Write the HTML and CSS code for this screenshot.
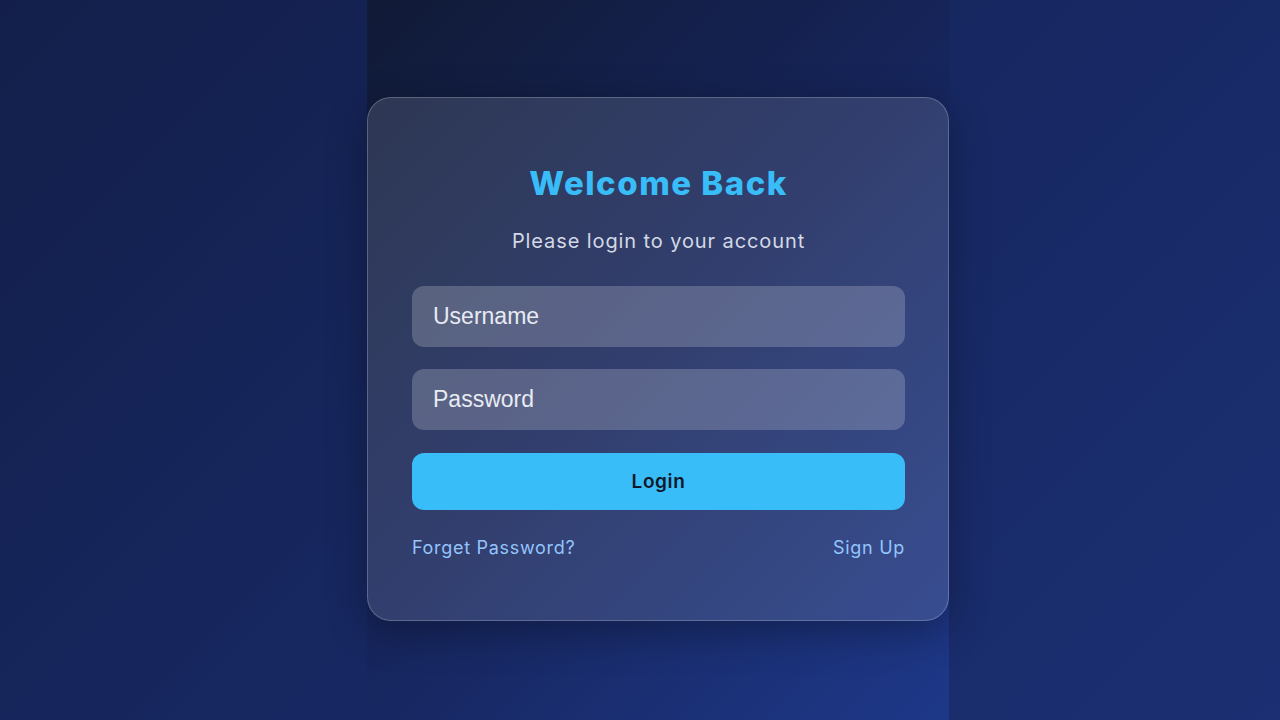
FILE: index.html
```html
<!DOCTYPE html>
<html lang="en">
<head>
<meta charset="utf-8">
<title>Login</title>
<link rel="stylesheet" href="styles.css">
</head>
<body>
<div class="page">
  <div class="side"></div>
  <div class="stage">
    <form class="card">
      <h1 class="title">Welcome Back</h1>
      <p class="subtitle">Please login to your account</p>
      <input class="field" type="text" placeholder="Username">
      <input class="field" type="password" placeholder="Password">
      <button class="btn" type="button">Login</button>
      <div class="links">
        <a href="#" class="link">Forget Password?</a>
        <a href="#" class="link">Sign Up</a>
      </div>
    </form>
  </div>
  <div class="side"></div>
</div>
</body>
</html>
```
FILE: styles.css
```css
* { box-sizing: border-box; }
html, body { margin: 0; padding: 0; }
body {
  width: 1280px;
  height: 720px;
  overflow: hidden;
  font-family: "Inter", "Noto Sans", sans-serif;
  background: linear-gradient(135deg, #131f4a 0%, #172863 55%, #1b2f72 100%);
}
.page {
  display: grid;
  grid-template-columns: 367px 582px 1fr;
  height: 720px;
}
.stage {
  display: flex;
  align-items: center;
  justify-content: center;
  height: 720px;
  background: linear-gradient(135deg, #111a36 0%, #16255c 50%, #1e3889 100%);
}
.card {
  width: 582px;
  height: 524px;
  margin-top: -2px;
  padding: 65px 43px 0 44px;
  border: 1px solid rgba(255, 255, 255, 0.22);
  border-radius: 24px;
  background: rgba(255, 255, 255, 0.12);
  box-shadow: 0 10px 40px rgba(0, 0, 0, 0.3);
  display: flex;
  flex-direction: column;
}
.title {
  margin: 0;
  text-align: center;
  font-size: 33px;
  line-height: 40px;
  font-weight: 800;
  letter-spacing: 1.5px;
  color: #38bdf8;
}
.subtitle {
  margin: 25px 0 0 0;
  text-align: center;
  font-size: 20px;
  line-height: 26px;
  letter-spacing: 0.9px;
  color: #d3d9e6;
}
.field {
  display: block;
  width: 100%;
  height: 61px;
  margin-top: 22px;
  padding: 0 21px;
  border: none;
  outline: none;
  border-radius: 12px;
  background: rgba(255, 255, 255, 0.2);
  font-family: "Liberation Sans", Arial, sans-serif;
  font-size: 23px;
  color: #fff;
}
.subtitle + .field { margin-top: 32px; }
.field::placeholder { color: #e8ebf2; opacity: 1; }
.btn {
  display: block;
  width: 100%;
  height: 57px;
  margin-top: 23px;
  border: none;
  border-radius: 12px;
  background: #38bdf8;
  color: #0f172a;
  font-family: "Inter", "Noto Sans", sans-serif;
  font-size: 19px;
  font-weight: 600;
  letter-spacing: 0.6px;
}
.links {
  display: flex;
  justify-content: space-between;
  margin-top: 25px;
}
.link {
  color: #93c5fd;
  text-decoration: none;
  font-size: 18px;
  line-height: 26px;
  letter-spacing: 0.7px;
}
```
